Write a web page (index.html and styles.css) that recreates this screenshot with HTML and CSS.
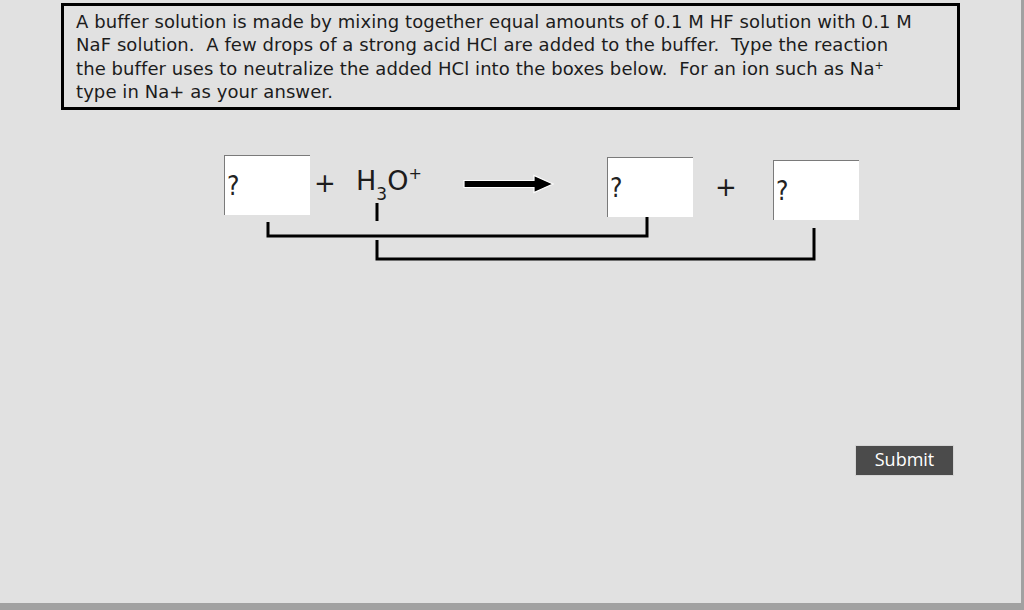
FILE: index.html
```html
<!DOCTYPE html>
<html lang="en">

<head>
    <meta charset="UTF-8">
    <meta name="viewport" content="width=device-width, initial-scale=1.0">
    <link rel="stylesheet" href="styles.css">
</head>

<body>
    <div class="frame">
        <div class="question">
            A buffer solution is made by mixing together equal amounts of 0.1 M HF solution with 0.1 M<br>
            NaF solution.&nbsp; A few drops of a strong acid HCl are added to the buffer.&nbsp; Type the reaction<br>
            the buffer uses to neutralize the added HCl into the boxes below.&nbsp; For an ion such as Na<span class="ion">+</span><br>
            type in Na+ as your answer.
        </div>

        <div class="equation">
            <input class="answer answer-acid" type="text" value="?">
            <span class="plus plus-left">+</span>
            <span class="formula">H<sub>3</sub>O<sup>+</sup></span>

            <svg class="arrow" width="92" height="20" viewBox="0 0 92 20">
                <path d="M1 6.5 H71 V1.5 L90 10 L71 18.5 V13.5 H1 Z" fill="#000" stroke="#fff" stroke-width="1.2" />
            </svg>

            <input class="answer answer-base" type="text" value="?">
            <span class="plus plus-right">+</span>
            <input class="answer answer-water" type="text" value="?">

            <!-- brackets linking each reactant to its product -->
            <svg class="links" width="600" height="70" viewBox="0 0 600 70">
                <g fill="none" stroke="#000" stroke-width="3">
                    <path d="M153 53 V71" />
                    <path d="M44 72 V86 H423 V67" />
                    <path d="M153 90 V109 H590 V78" />
                </g>
            </svg>
        </div>

        <div class="actions">
            <button class="submit" type="button">Submit</button>
        </div>
    </div>
</body>

</html>
```

FILE: styles.css
```css
:root {
    --page-bg: #e1e1e1;
    --edge: #a1a1a1;
    --ink: #1c1c1c;
    --button-bg: #4b4b4b;
}

body {
    margin: 0;
    background-color: var(--edge);
    font-family: "DejaVu Sans", Verdana, sans-serif;
    color: var(--ink);
}

.frame {
    width: 1021px;
    height: 603px;
    background-color: var(--page-bg);
    padding-top: 3px;
    box-sizing: border-box;
    overflow: hidden;
}

.question {
    width: 899px;
    height: 107px;
    margin-left: 61px;
    padding: 4px 0 0 12px;
    box-sizing: border-box;
    border: 3px solid #000;
    font-size: 18px;
    line-height: 23.3px;
    letter-spacing: 0.08px;
    white-space: nowrap;
}

.ion {
    font-size: 11px;
    vertical-align: 6px;
    line-height: 0;
}

/* equation area: pieces sit on a free canvas like the original applet */
.equation {
    position: relative;
    height: 336px;
}

.answer {
    position: absolute;
    width: 86px;
    height: 60px;
    margin: 0;
    padding: 0 0 0 2px;
    box-sizing: border-box;
    border: none;
    border-left: 1px solid #7a7a7a;
    border-top: 1px solid #7a7a7a;
    background: #fff;
    font-family: "DejaVu Sans Condensed", "DejaVu Sans", sans-serif;
    font-size: 26px;
    color: #222;
}

.answer-acid {
    left: 224px;
    top: 45px;
}

.answer-base {
    left: 607px;
    top: 47px;
}

.answer-water {
    left: 773px;
    top: 50px;
}

.plus {
    position: absolute;
    font-size: 26px;
    line-height: 1;
}

.plus-left {
    left: 314px;
    top: 60px;
}

.plus-right {
    left: 715px;
    top: 64px;
}

.formula {
    position: absolute;
    left: 356px;
    top: 57px;
    font-size: 27px;
    line-height: 1;
}

.formula sub {
    font-size: 17px;
    vertical-align: -10px;
    line-height: 0;
}

.formula sup {
    font-size: 16px;
    vertical-align: 11px;
    line-height: 0;
}

.arrow {
    position: absolute;
    left: 463px;
    top: 64px;
}

.links {
    position: absolute;
    left: 224px;
    top: 40px;
    overflow: visible;
}

.actions {
    display: flex;
    justify-content: flex-end;
    padding-right: 67px;
}

.submit {
    width: 99px;
    height: 31px;
    margin-top: -1px;
    border: 1px solid #d4d4d4;
    background-color: var(--button-bg);
    color: #fff;
    font-family: "Open Sans", sans-serif;
    font-size: 18px;
    padding: 0 0 3px 0;
    line-height: 1;
}
```
